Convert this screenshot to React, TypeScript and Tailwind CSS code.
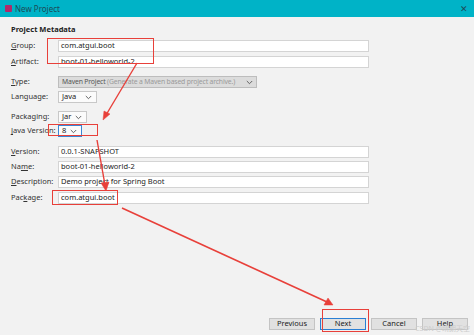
import type { ReactNode } from "react";

const FONT = { fontFamily: '"Noto Sans", "Noto Sans CJK SC", sans-serif' };

function Chevron() {
  return (
    <svg width="7" height="5" viewBox="0 0 7 5" className="shrink-0">
      <path d="M0.8 1 L3.5 3.7 L6.2 1" fill="none" stroke="#555" strokeWidth="0.9" />
    </svg>
  );
}

function Label({ children }: { children: ReactNode }) {
  return <div className="w-[47px] shrink-0 whitespace-nowrap text-[7.5px] text-[#333]">{children}</div>;
}

function TextRow({ label, value, className = "" }: { label: ReactNode; value: string; className?: string }) {
  return (
    <div className={`flex h-[12px] items-center ${className}`}>
      <Label>{label}</Label>
      <div className="flex h-[12px] w-[311px] items-center border border-[#d4d4d4] bg-white px-[2px] text-[7.5px] text-[#222]">
        {value}
      </div>
    </div>
  );
}

function SelectRow({
  label,
  value,
  width,
  focused = false,
  className = "",
}: {
  label: ReactNode;
  value: string;
  width: string;
  focused?: boolean;
  className?: string;
}) {
  return (
    <div className={`flex h-[12px] items-center ${className}`}>
      <Label>{label}</Label>
      <div
        className={`flex h-[12px] items-center justify-between border bg-[#fbfbfb] pl-[3px] pr-[4px] text-[7.5px] text-[#222] ${width} ${
          focused ? "border-[#3a86d6]" : "border-[#c8c8c8]"
        }`}
      >
        <span>{value}</span>
        <Chevron />
      </div>
    </div>
  );
}

function Btn({ children, active = false }: { children: ReactNode; active?: boolean }) {
  return (
    <div
      className={`flex h-[12px] w-[46px] items-center justify-center border bg-[#e1e1e1] text-[7.5px] text-[#222] ${
        active ? "border-[#2a7fd4]" : "border-[#c4c4c4]"
      }`}
    >
      {children}
    </div>
  );
}

export default function App() {
  return (
    <div style={FONT} className="relative h-[335px] w-[474px] overflow-hidden bg-[#f2f2f2]">
      {/* title bar */}
      <div className="flex h-[17px] items-center justify-between bg-[#00b3c7] pl-[5px] pr-[6px]">
        <div className="flex items-center gap-[3px]">
          <div className="h-[7px] w-[7px] rounded-[1px] bg-[#b02a6a]" />
          <span className="text-[8px] text-[#1c4c58]">New Project</span>
        </div>
        <span className="text-[9px] leading-none text-[#1c4c58]">✕</span>
      </div>

      <div className="flex flex-col pl-[11px] pt-[7px]">
        <div className="text-[7.5px] font-bold leading-[10px] text-[#222]">Project Metadata</div>

        <TextRow className="mt-[6px]" label={<><u>G</u>roup:</>} value="com.atgui.boot" />
        <TextRow className="mt-[4px]" label={<><u>A</u>rtifact:</>} value="boot-01-helloworld-2" />

        <div className="mt-[8px] flex h-[12px] items-center">
          <Label>
            <u>T</u>ype:
          </Label>
          <div className="flex h-[12px] w-[199px] items-center justify-between gap-[2px] border border-[#bdbdbd] bg-[#dcdcdc] pl-[3px] pr-[3px] text-[6.8px] tracking-[-0.15px]">
            <span className="whitespace-nowrap">
              <span className="text-[#555]">Maven Project</span>{" "}
              <span className="text-[#9a9a9a]">(Generate a Maven based project archive.)</span>
            </span>
            <Chevron />
          </div>
        </div>
        <SelectRow className="mt-[3px]" label="Language:" value="Java" width="w-[39px]" />

        <SelectRow className="mt-[8px]" label="Packaging:" value="Jar" width="w-[29px]" />
        <SelectRow className="mt-[2px]" label={<><u>J</u>ava Version:</>} value="8" width="w-[24px]" focused />

        <TextRow className="mt-[9px]" label={<><u>V</u>ersion:</>} value="0.0.1-SNAPSHOT" />
        <TextRow className="mt-[3px]" label={<>Na<u>m</u>e:</>} value="boot-01-helloworld-2" />
        <TextRow className="mt-[3px]" label={<><u>D</u>escription:</>} value="Demo project for Spring Boot" />
        <TextRow className="mt-[4px]" label={<>Pac<u>k</u>age:</>} value="com.atgui.boot" />
      </div>

      {/* bottom buttons */}
      <div className="absolute bottom-[5px] right-[6px] flex gap-[5px]">
        <Btn>Previous</Btn>
        <Btn active>Next</Btn>
        <Btn>Cancel</Btn>
        <Btn>Help</Btn>
      </div>

      {/* annotations */}
      <div className="pointer-events-none absolute left-[47px] top-[38px] h-[26px] w-[107px] border-[1.5px] border-[#e8403a]" />
      <div className="pointer-events-none absolute left-[48px] top-[124px] h-[12px] w-[50px] border-[1.5px] border-[#e8403a]" />
      <div className="pointer-events-none absolute left-[52px] top-[190px] h-[15px] w-[66px] border-[1.5px] border-[#e8403a]" />
      <div className="pointer-events-none absolute left-[322px] top-[309px] h-[23px] w-[47px] border-[1.5px] border-[#e8403a]" />

      <svg className="pointer-events-none absolute left-0 top-0" width="474" height="335">
        <g stroke="#e8403a" fill="#e8403a">
          <line x1="137" y1="63" x2="106" y2="115" strokeWidth="1.4" />
          <polygon points="103,120 104,111 110,114" strokeWidth="0.5" />
          <line x1="97" y1="140" x2="105" y2="185" strokeWidth="1.4" />
          <polygon points="106,191 101,183 109,182" strokeWidth="0.5" />
          <line x1="122" y1="208" x2="327" y2="302" strokeWidth="1.6" />
          <polygon points="333,305 324,305 328,298" strokeWidth="0.5" />
        </g>
      </svg>

      <div className="pointer-events-none absolute bottom-[1px] right-[4px] text-[7px] text-[#cdcdcd]">CSDN @晴朗天空</div>
    </div>
  );
}
